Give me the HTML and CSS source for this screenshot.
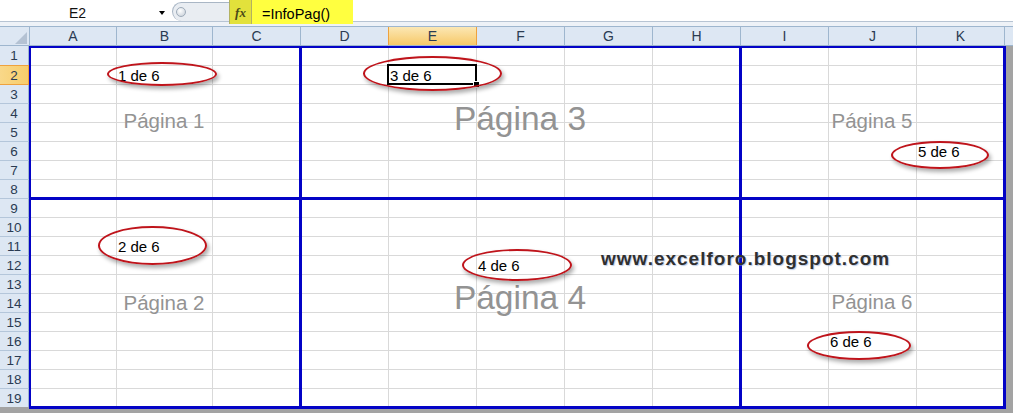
FILE: index.html
```html
<!DOCTYPE html>
<html lang="es">
<head>
<meta charset="utf-8">
<title>InfoPag</title>
<link rel="stylesheet" href="styles.css">
</head>
<body>
<div class="fbar">
  <div class="namebox"><span class="nb-text">E2</span><span class="dd"></span></div>
  <div class="grip"><span class="knob"></span></div>
  <div class="fx">fx</div>
  <div class="formula">=InfoPag()</div>
</div>
<div class="gap"></div>
<div class="colhead">
  <div class="corner"><svg width="12" height="12" viewBox="0 0 12 12"><polygon points="12,0 12,12 0,12" fill="#b4c2d3"/></svg></div>
  <div class="ch">A</div><div class="ch">B</div><div class="ch">C</div><div class="ch">D</div>
  <div class="ch selh">E</div><div class="ch">F</div><div class="ch">G</div><div class="ch">H</div>
  <div class="ch">I</div><div class="ch">J</div><div class="ch">K</div><div class="ch"></div>
</div>
<div class="sheet-wrap">
  <div class="sheet">
    <div class="rh first">1</div><div class="c"></div><div class="c"></div><div class="c"></div><div class="c"></div><div class="c"></div><div class="c"></div><div class="c"></div><div class="c"></div><div class="c"></div><div class="c"></div><div class="c"></div>
    <div class="rh selr">2</div><div class="c"></div><div class="c">1 de 6</div><div class="c"></div><div class="c"></div><div class="c sel">3 de 6</div><div class="c"></div><div class="c"></div><div class="c"></div><div class="c"></div><div class="c"></div><div class="c"></div>
    <div class="rh">3</div><div class="c"></div><div class="c"></div><div class="c"></div><div class="c"></div><div class="c"></div><div class="c"></div><div class="c"></div><div class="c"></div><div class="c"></div><div class="c"></div><div class="c"></div>
    <div class="rh">4</div><div class="c"></div><div class="c"></div><div class="c"></div><div class="c"></div><div class="c"></div><div class="c"></div><div class="c"></div><div class="c"></div><div class="c"></div><div class="c"></div><div class="c"></div>
    <div class="rh">5</div><div class="c"></div><div class="c"></div><div class="c"></div><div class="c"></div><div class="c"></div><div class="c"></div><div class="c"></div><div class="c"></div><div class="c"></div><div class="c"></div><div class="c"></div>
    <div class="rh">6</div><div class="c"></div><div class="c"></div><div class="c"></div><div class="c"></div><div class="c"></div><div class="c"></div><div class="c"></div><div class="c"></div><div class="c"></div><div class="c"></div><div class="c">5 de 6</div>
    <div class="rh">7</div><div class="c"></div><div class="c"></div><div class="c"></div><div class="c"></div><div class="c"></div><div class="c"></div><div class="c"></div><div class="c"></div><div class="c"></div><div class="c"></div><div class="c"></div>
    <div class="rh">8</div><div class="c"></div><div class="c"></div><div class="c"></div><div class="c"></div><div class="c"></div><div class="c"></div><div class="c"></div><div class="c"></div><div class="c"></div><div class="c"></div><div class="c"></div>
    <div class="rh">9</div><div class="c"></div><div class="c"></div><div class="c"></div><div class="c"></div><div class="c"></div><div class="c"></div><div class="c"></div><div class="c"></div><div class="c"></div><div class="c"></div><div class="c"></div>
    <div class="rh">10</div><div class="c"></div><div class="c"></div><div class="c"></div><div class="c"></div><div class="c"></div><div class="c"></div><div class="c"></div><div class="c"></div><div class="c"></div><div class="c"></div><div class="c"></div>
    <div class="rh">11</div><div class="c"></div><div class="c">2 de 6</div><div class="c"></div><div class="c"></div><div class="c"></div><div class="c"></div><div class="c"></div><div class="c"></div><div class="c"></div><div class="c"></div><div class="c"></div>
    <div class="rh">12</div><div class="c"></div><div class="c"></div><div class="c"></div><div class="c"></div><div class="c"></div><div class="c">4 de 6</div><div class="c"></div><div class="c"></div><div class="c"></div><div class="c"></div><div class="c"></div>
    <div class="rh">13</div><div class="c"></div><div class="c"></div><div class="c"></div><div class="c"></div><div class="c"></div><div class="c"></div><div class="c"></div><div class="c"></div><div class="c"></div><div class="c"></div><div class="c"></div>
    <div class="rh">14</div><div class="c"></div><div class="c"></div><div class="c"></div><div class="c"></div><div class="c"></div><div class="c"></div><div class="c"></div><div class="c"></div><div class="c"></div><div class="c"></div><div class="c"></div>
    <div class="rh">15</div><div class="c"></div><div class="c"></div><div class="c"></div><div class="c"></div><div class="c"></div><div class="c"></div><div class="c"></div><div class="c"></div><div class="c"></div><div class="c"></div><div class="c"></div>
    <div class="rh">16</div><div class="c"></div><div class="c"></div><div class="c"></div><div class="c"></div><div class="c"></div><div class="c"></div><div class="c"></div><div class="c"></div><div class="c"></div><div class="c">6 de 6</div><div class="c"></div>
    <div class="rh">17</div><div class="c"></div><div class="c"></div><div class="c"></div><div class="c"></div><div class="c"></div><div class="c"></div><div class="c"></div><div class="c"></div><div class="c"></div><div class="c"></div><div class="c"></div>
    <div class="rh">18</div><div class="c"></div><div class="c"></div><div class="c"></div><div class="c"></div><div class="c"></div><div class="c"></div><div class="c"></div><div class="c"></div><div class="c"></div><div class="c"></div><div class="c"></div>
    <div class="rh">19</div><div class="c"></div><div class="c"></div><div class="c"></div><div class="c"></div><div class="c"></div><div class="c"></div><div class="c"></div><div class="c"></div><div class="c"></div><div class="c"></div><div class="c"></div>
  </div>
  <div class="overlay">
    <div class="pg pg1"></div>
    <div class="pg pg3"></div>
    <div class="pg pg5"></div>
    <div class="pg pg2"></div>
    <div class="pg pg4"></div>
    <div class="pg pg6"></div>
    <div class="lbl l1">Página 1</div>
    <div class="lbl big l3">Página 3</div>
    <div class="lbl l5">Página 5</div>
    <div class="lbl l2">Página 2</div>
    <div class="lbl big l4">Página 4</div>
    <div class="lbl l6">Página 6</div>
  </div>
  <div class="wm">www.excelforo.blogspot.com</div>
  <div class="oval o1"></div>
  <div class="oval o3"></div>
  <div class="oval o5"></div>
  <div class="oval o2"></div>
  <div class="oval o4"></div>
  <div class="oval o6"></div>
</div>
</body>
</html>
```
FILE: styles.css
```css
html, body {
  margin: 0;
  padding: 0;
}
body {
  width: 1013px;
  height: 413px;
  overflow: hidden;
  background: #a3a3a3;
  font-family: "Liberation Sans", Arial, sans-serif;
}

/* formula bar */
.fbar {
  position: relative;
  z-index: 2;
  display: flex;
  align-items: flex-start;
  height: 22px;
  background: #fff;
  border-bottom: 1px solid #b7c4d3;
  box-sizing: border-box;
}
.namebox {
  width: 172px;
  height: 21px;
  display: flex;
  align-items: center;
}
.nb-text {
  width: 155px;
  text-align: center;
  font-size: 14px;
  color: #111;
  padding-top: 4px;
}
.dd {
  width: 0;
  height: 0;
  border-left: 3.5px solid transparent;
  border-right: 3.5px solid transparent;
  border-top: 4px solid #000;
  margin-left: 4px;
  margin-top: 4px;
}
.grip {
  width: 57px;
  height: 19px;
  margin-top: 2px;
  background: #e9edf2;
  border: 1px solid #a9b6c5;
  border-right: none;
  border-bottom: none;
  border-radius: 10px 0 0 10px;
  box-sizing: border-box;
  display: flex;
  align-items: center;
}
.knob {
  width: 10px;
  height: 10px;
  margin-left: 3px;
  border-radius: 50%;
  border: 1px solid #9eabb9;
  background: radial-gradient(circle at 40% 35%, #ffffff, #c3cbd5);
  box-sizing: border-box;
}
.fx {
  width: 23px;
  height: 24px;
  background: #e2e13b;
  border-left: 1px solid #b3b262;
  border-right: 1px solid #b3b262;
  box-sizing: border-box;
  display: flex;
  align-items: center;
  justify-content: center;
  font-family: "Liberation Serif", "Times New Roman", serif;
  font-style: italic;
  font-weight: bold;
  font-size: 13px;
  color: #4a4a18;
  padding-top: 2px;
}
.formula {
  width: 101px;
  height: 24px;
  background: #ffff40;
  box-sizing: border-box;
  padding: 3px 0 0 10px;
  display: flex;
  align-items: center;
  font-size: 14.5px;
  color: #000;
}
.gap {
  height: 4px;
  background: #eef2f7;
}

/* column header */
.colhead {
  display: grid;
  grid-template-columns: 29px 87px 96px repeat(9, 88px) 1fr;
  height: 20px;
  background: #dde7f3;
  border-top: 1px solid #9eb6ce;
  border-bottom: 1px solid #9eb6ce;
  box-sizing: border-box;
}
.corner {
  display: flex;
  align-items: flex-end;
  justify-content: flex-end;
  padding: 0 2px 1px 0;
}
.ch {
  border-left: 1px solid #9eb6ce;
  display: flex;
  align-items: center;
  justify-content: center;
  font-size: 14px;
  color: #2a3b52;
}
.ch.selh {
  position: relative;
  z-index: 1;
  background: linear-gradient(#fbe7b4, #f7c969);
  border-left-color: #eea23e;
  box-shadow: 1px 0 0 #eea23e;
}

/* sheet */
.sheet-wrap {
  position: relative;
  width: 1004px;
}
.sheet {
  display: grid;
  grid-template-columns: 29px 87px 96px repeat(9, 88px);
  grid-auto-rows: 19px;
  background: #fff;
}
.rh {
  background: #dde7f3;
  border-top: 1px solid #b4c6da;
  border-right: 1px solid #9eb6ce;
  box-sizing: border-box;
  display: flex;
  align-items: center;
  justify-content: center;
  font-size: 13.5px;
  color: #2a3b52;
}
.rh.first {
  border-top: none;
}
.rh.selr {
  position: relative;
  z-index: 1;
  background: linear-gradient(90deg, #f9d889, #f7cd6b);
  border-top-color: #eea23e;
  border-right-color: #eea23e;
  box-shadow: 0 1px 0 #eea23e;
}
.c {
  border-left: 1px solid #d9d9d9;
  border-top: 1px solid #d9d9d9;
  box-sizing: border-box;
  padding: 2px 0 0 1px;
  font-size: 15px;
  line-height: 16px;
  color: #000;
  white-space: nowrap;
}
.c.sel {
  position: relative;
  z-index: 1;
  outline: 2px solid #000;
  outline-offset: -1px;
}
.c.sel::after {
  content: "";
  position: absolute;
  right: -4px;
  bottom: -4px;
  width: 5px;
  height: 5px;
  background: #000;
  border: 1px solid #fff;
}

/* page breaks and labels */
.overlay {
  position: absolute;
  left: 29px;
  top: 0;
  z-index: 2;
  display: grid;
  grid-template-columns: 87px 96px repeat(9, 88px);
  grid-template-rows: repeat(19, 19px);
}
.pg {
  border: 0 solid #0303c6;
  border-right-width: 3px;
  border-bottom-width: 3px;
  margin: 0 -2px -2px 0;
}
.pg1 { grid-column: 1 / 4; grid-row: 1 / 9; border-top-width: 2px; border-left-width: 2px; }
.pg3 { grid-column: 4 / 9; grid-row: 1 / 9; border-top-width: 2px; }
.pg5 { grid-column: 9 / 12; grid-row: 1 / 9; border-top-width: 2px; }
.pg2 { grid-column: 1 / 4; grid-row: 9 / 20; border-left-width: 2px; }
.pg4 { grid-column: 4 / 9; grid-row: 9 / 20; }
.pg6 { grid-column: 9 / 12; grid-row: 9 / 20; }

.lbl {
  display: flex;
  align-items: center;
  justify-content: center;
  white-space: nowrap;
  font-size: 20.5px;
  color: #939393;
  text-shadow: 0 0 1px rgba(255, 255, 255, 0.6);
}
.lbl.big {
  font-size: 33.5px;
}
.l1 { grid-column: 2; grid-row: 4 / 6; padding-bottom: 2px; }
.l3 { grid-column: 6; grid-row: 4 / 6; padding-bottom: 7px; }
.l5 { grid-column: 10; grid-row: 4 / 6; padding-bottom: 2px; }
.l2 { grid-column: 2; grid-row: 14; }
.l4 { grid-column: 6; grid-row: 13 / 16; padding-bottom: 9px; }
.l6 { grid-column: 10; grid-row: 14; padding-bottom: 2px; }

/* watermark text box */
.wm {
  position: absolute;
  left: 601px;
  top: 202px;
  z-index: 3;
  font-size: 19px;
  font-weight: bold;
  letter-spacing: 1px;
  color: #303030;
  text-shadow: 1px 1px 1px rgba(130, 160, 210, 0.55);
  white-space: nowrap;
}

/* drawn ellipses */
.oval {
  position: absolute;
  z-index: 4;
  box-sizing: border-box;
  border: 2px solid #bf141b;
  border-radius: 50%;
  box-shadow: 2px 3px 4px rgba(0, 0, 0, 0.33);
}
.o1 { left: 107px; top: 16px; width: 110px; height: 24px; }
.o3 { left: 363px; top: 10px; width: 139px; height: 35px; }
.o5 { left: 891px; top: 95px; width: 98px; height: 28px; }
.o2 { left: 98px; top: 180px; width: 109px; height: 39px; }
.o4 { left: 462px; top: 203px; width: 110px; height: 32px; }
.o6 { left: 807px; top: 285px; width: 104px; height: 29px; }
```
